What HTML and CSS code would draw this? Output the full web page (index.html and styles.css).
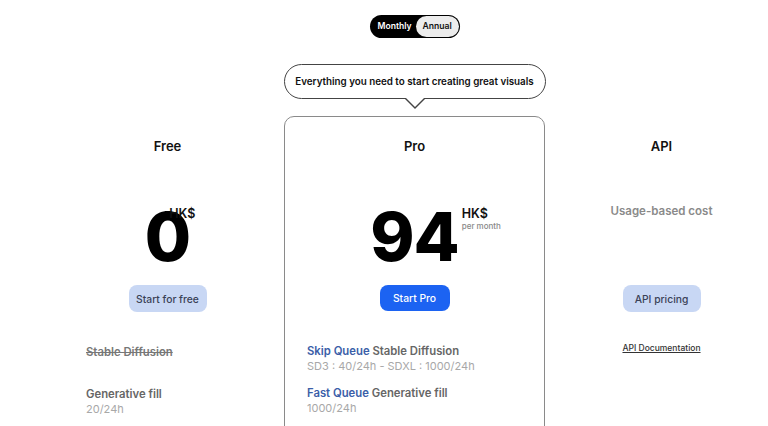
FILE: index.html
```html
<!DOCTYPE html>
<html>
<head>
<meta charset="utf-8">
<link rel="stylesheet" href="styles.css">
</head>
<body>
<div class="page">
  <div class="toggle-row">
    <div class="toggle">
      <span class="opt opt-active">Monthly</span>
      <span class="opt opt-idle">Annual</span>
    </div>
  </div>
  <div class="bubble-row">
    <div class="bubble">Everything you need to start creating great visuals</div>
  </div>
  <div class="plans">
    <div class="plan plan-free">
      <div class="plan-title">Free</div>
      <div class="price">
        <span class="amount">0<span class="suffix suffix-free"><span class="cur">HK$</span></span></span>
      </div>
      <div class="cta"><a class="btn btn-light">Start for free</a></div>
      <div class="features">
        <div class="feature">
          <div class="f-title strike">Stable Diffusion</div>
          <div class="f-sub"></div>
        </div>
        <div class="feature">
          <div class="f-title">Generative fill</div>
          <div class="f-sub">20/24h</div>
        </div>
      </div>
    </div>
    <div class="plan plan-pro">
      <div class="plan-title">Pro</div>
      <div class="price">
        <span class="amount">94<span class="suffix"><span class="cur">HK$</span><span class="per">per month</span></span></span>
      </div>
      <div class="cta"><a class="btn btn-blue">Start Pro</a></div>
      <div class="features">
        <div class="feature">
          <div class="f-title"><span class="hl">Skip Queue</span> Stable Diffusion</div>
          <div class="f-sub">SD3 : 40/24h - SDXL : 1000/24h</div>
        </div>
        <div class="feature">
          <div class="f-title"><span class="hl">Fast Queue</span> Generative fill</div>
          <div class="f-sub">1000/24h</div>
        </div>
      </div>
    </div>
    <div class="plan plan-api">
      <div class="plan-title">API</div>
      <div class="price price-text">Usage-based cost</div>
      <div class="cta"><a class="btn btn-light">API pricing</a></div>
      <div class="doc"><a class="doc-link">API Documentation</a></div>
    </div>
  </div>
</div>
</body>
</html>
```
FILE: styles.css
```css
* { box-sizing: border-box; }
html, body { margin: 0; padding: 0; background: #fff; }
body {
  font-family: Inter, "Noto Sans", "Liberation Sans", sans-serif;
  color: #111;
  overflow: hidden;
  height: 426px;
}
.page {
  width: 741px;
  margin-left: 44px;
}
.toggle-row {
  display: flex;
  justify-content: center;
  padding-top: 15px;
}
.toggle {
  display: flex;
  align-items: center;
  background: #000;
  border-radius: 12px;
  height: 23px;
  width: 90px;
  padding: 0 1px 0 0;
}
.opt {
  font-size: 8.6px;
  font-weight: 600;
  line-height: 21px;
  border-radius: 11px;
}
.opt-active { color: #fff; padding: 0 4px 0 8px; }
.opt-idle {
  background: #ececec;
  color: #111;
  height: 21px;
  flex: 1;
  text-align: center;
}

.bubble-row {
  display: flex;
  justify-content: center;
  margin-top: 26px;
}
.bubble {
  position: relative;
  width: 262px;
  height: 35px;
  border: 1px solid #444;
  border-radius: 18px;
  font-size: 9.8px;
  font-weight: 600;
  display: flex;
  align-items: center;
  justify-content: center;
  color: #111;
}
.bubble::before, .bubble::after {
  content: "";
  position: absolute;
  left: 50%;
  width: 0; height: 0;
  border-style: solid;
}
.bubble::before {
  top: 100%;
  margin-left: -11px;
  border-width: 11px 11px 0 11px;
  border-color: #444 transparent transparent transparent;
}
.bubble::after {
  top: 100%;
  margin-left: -10px;
  margin-top: -1px;
  border-width: 10px 10px 0 10px;
  border-color: #fff transparent transparent transparent;
}

.plans {
  display: grid;
  grid-template-columns: 247px 247px 247px;
  margin-top: 17px;
}
.plan {
  display: flex;
  flex-direction: column;
  padding-top: 20px;
  height: 330px;
}
.plan-pro {
  margin: 0 -7px;
  border: 1px solid #8a8a8a;
  border-radius: 10px;
  padding-top: 19px;
}
.plan-title {
  text-align: center;
  font-size: 13px;
  font-weight: 600;
  line-height: 20px;
  height: 20px;
}
.price {
  margin-top: 47px;
  height: 68px;
  display: flex;
  justify-content: center;
}
.amount {
  position: relative;
  font-size: 67px;
  font-weight: 800;
  line-height: 68px;
  letter-spacing: -1px;
  color: #000;
}
.suffix {
  position: absolute;
  left: 100%;
  top: 4px;
  margin-left: 3px;
  display: flex;
  flex-direction: column;
  letter-spacing: 0;
}
.suffix-free { margin-left: -21px; }
.cur {
  font-size: 12.5px;
  font-weight: 600;
  line-height: 14px;
  color: #111;
}
.per {
  font-size: 8px;
  font-weight: 500;
  line-height: 11px;
  color: #888;
  white-space: nowrap;
}
.price-text {
  font-size: 11.5px;
  font-weight: 600;
  color: #8a8a8a;
  line-height: 16px;
}
.cta {
  margin-top: 14px;
  display: flex;
  justify-content: center;
}
.btn {
  display: inline-flex;
  align-items: center;
  justify-content: center;
  height: 27px;
  min-width: 78px;
  border-radius: 8px;
  font-size: 10.3px;
  font-weight: 500;
  padding: 0 6px;
}
.btn-light { background: #c8d7f4; color: #3a4257; }
.btn-blue { background: #1c63f2; color: #fff; min-width: 70px; height: 26px; }

.features {
  margin-top: 33px;
  display: flex;
  flex-direction: column;
  gap: 12px;
}
.plan-free .features { padding-left: 42px; }
.plan-pro .features { padding-left: 22px; }
.feature { display: flex; flex-direction: column; }
.f-title {
  font-size: 11.3px;
  font-weight: 600;
  color: #666;
  line-height: 15px;
}
.f-title.strike { text-decoration: line-through; color: #777; }
.hl { color: #3b5ea8; }
.f-sub {
  font-size: 11px;
  color: #a8a8a8;
  line-height: 15px;
  min-height: 15px;
}
.doc {
  margin-top: 31px;
  display: flex;
  justify-content: center;
}
.doc-link {
  font-size: 8.5px;
  font-weight: 500;
  color: #333;
  text-decoration: underline;
  line-height: 11px;
}
```
